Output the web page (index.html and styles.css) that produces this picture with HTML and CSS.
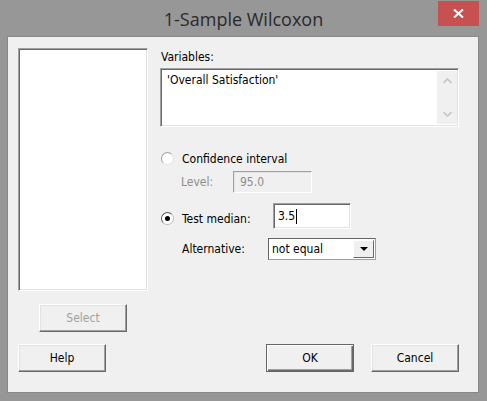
FILE: index.html
```html
<!DOCTYPE html>
<html>
<head>
<meta charset="utf-8">
<title>1-Sample Wilcoxon</title>
<link rel="stylesheet" href="styles.css">
</head>
<body>
<div class="window">
  <div class="titlebar">
    <div class="title">1-Sample Wilcoxon</div>
    <div class="close">
      <svg width="11" height="9" viewBox="0 0 11 9"><path d="M1 0.5 L10 8.5 M10 0.5 L1 8.5" stroke="#fff" stroke-width="2" fill="none"/></svg>
    </div>
  </div>
  <div class="client">
    <div class="main">
      <div class="left">
        <div class="listbox sunken"></div>
        <div class="btn disabled">Select</div>
      </div>
      <div class="right">
        <div class="label var-label">Variables:</div>
        <div class="textarea sunken">
          <div class="ta-text">'Overall Satisfaction'</div>
          <div class="scroll">
            <div class="sb-btn"><svg width="9" height="6" viewBox="0 0 9 6"><path d="M0.5 5 L4.5 1 L8.5 5" stroke="#c4c4c4" stroke-width="1.6" fill="none"/></svg></div>
            <div class="sb-btn"><svg width="9" height="6" viewBox="0 0 9 6"><path d="M0.5 1 L4.5 5 L8.5 1" stroke="#c4c4c4" stroke-width="1.6" fill="none"/></svg></div>
          </div>
        </div>
        <div class="row row-ci">
          <span class="radio"></span>
          <span class="label">Confidence interval</span>
        </div>
        <div class="row row-level">
          <span class="label dim level-label">Level:</span>
          <span class="field level-field">95.0</span>
        </div>
        <div class="row row-tm">
          <span class="radio checked"></span>
          <span class="label tm-label">Test median:</span>
          <span class="field tm-field sunken">3.5<span class="caret"></span></span>
        </div>
        <div class="row row-alt">
          <span class="label alt-label">Alternative:</span>
          <span class="combo">
            <span class="combo-text">not equal</span>
            <span class="combo-btn"><svg width="8" height="4" viewBox="0 0 8 4"><path d="M0 0 H8 L4 4 Z" fill="#000"/></svg></span>
          </span>
        </div>
      </div>
    </div>
    <div class="footer">
      <div class="btn">Help</div>
      <div class="btn default ok">OK</div>
      <div class="btn">Cancel</div>
    </div>
  </div>
</div>
</body>
</html>
```

FILE: styles.css
```css
* { box-sizing: border-box; }

body {
  margin: 0;
  background: #979797;
  font-family: "DejaVu Sans Condensed", "Liberation Sans", sans-serif;
  font-size: 12px;
  color: #000;
}

.window {
  width: 487px;
  height: 401px;
  background: #979797;
  display: flex;
  flex-direction: column;
}

/* caption */
.titlebar {
  height: 37px;
  display: grid;
  grid-template-columns: 1fr auto 1fr;
  flex: none;
}
.title {
  grid-column: 2;
  font-family: "Open Sans", "Noto Sans", sans-serif;
  font-size: 18px;
  line-height: 25px;
  padding-top: 7px;
  color: #2a2a2a;
  white-space: nowrap;
}
.close {
  grid-column: 3;
  justify-self: end;
  align-self: start;
  margin-top: 1px;
  margin-right: 8px;
  width: 41px;
  height: 25px;
  background: #c75050;
  display: flex;
  align-items: center;
  justify-content: center;
}

/* dialog body */
.client {
  flex: 1;
  margin: 0 9px 9px 8px;
  background: #f0f0f0;
  padding: 11px 10px 0 10px;
  box-shadow: 0 0 0 1px #888888;
}

.main {
  display: flex;
  gap: 12px;
}

.left {
  width: 130px;
  display: flex;
  flex-direction: column;
  align-items: center;
  gap: 13px;
}

.sunken {
  border: 1px solid;
  border-color: #a0a0a0 #ffffff #ffffff #a0a0a0;
  box-shadow: inset 1px 1px 0 #696969, inset -1px -1px 0 #e3e3e3;
  background: #fff;
}

.listbox {
  width: 130px;
  height: 243px;
}

.btn {
  width: 88px;
  height: 28px;
  background: #f0f0f0;
  border: 1px solid;
  border-color: #ffffff #696969 #696969 #ffffff;
  box-shadow: inset -1px -1px 0 #a0a0a0, inset 1px 1px 0 #e3e3e3;
  display: flex;
  align-items: center;
  justify-content: center;
  padding-bottom: 1px;
}
.btn.disabled { color: #a0a0a0; }
.btn.default {
  border-color: #646464;
  box-shadow: inset 1px 1px 0 #ffffff, inset -1px -1px 0 #696969, inset -2px -2px 0 #a0a0a0;
}

.right {
  width: 299px;
  display: flex;
  flex-direction: column;
}

.label { white-space: nowrap; line-height: 16px; }
.dim { color: #8d8d8d; }

.var-label {
  margin-top: 1px;
  margin-left: 1px;
  height: 16px;
}

.textarea {
  margin-top: 3px;
  height: 59px;
  display: flex;
  padding: 2px 1px 2px 2px;
}
.ta-text {
  flex: 1;
  padding: 1px 0 0 4px;
  line-height: 16px;
}
.scroll {
  width: 20px;
  background: #f0f0f0;
  display: flex;
  flex-direction: column;
  justify-content: space-between;
}
.sb-btn {
  height: 20px;
  display: flex;
  align-items: center;
  justify-content: center;
}

.row {
  display: flex;
  align-items: center;
}
.row-ci { margin-top: 21px; height: 21px; }
.row-level { margin-top: 2px; height: 22px; }
.row-tm { margin-top: 10px; height: 26px; }
.row-alt { margin-top: 9px; height: 22px; }

.radio {
  width: 13px;
  height: 13px;
  margin-left: 1px;
  margin-right: 8px;
  border-radius: 50%;
  border: 1px solid;
  border-color: #a0a0a0 #e3e3e3 #e3e3e3 #a0a0a0;
  background: #fff;
  display: flex;
  align-items: center;
  justify-content: center;
  flex: none;
}
.radio.checked {
  border-color: #5a5a5a #bdbdbd #bdbdbd #5a5a5a;
}
.radio.checked::after {
  content: "";
  width: 5px;
  height: 5px;
  border-radius: 50%;
  background: #000;
}
.row-tm .radio { margin-top: 5px; }
.row-tm .tm-label { margin-top: 5px; }

.level-label { margin-left: 21px; width: 52px; }
.field {
  display: flex;
  align-items: center;
  padding-left: 5px;
}
.level-field {
  width: 79px;
  height: 22px;
  border: 1px solid;
  border-color: #a0a0a0 #ffffff #ffffff #a0a0a0;
  box-shadow: inset 1px 1px 0 #e3e3e3;
  background: #f0f0f0;
  color: #8d8d8d;
  padding-left: 6px;
}

.tm-label { width: 91px; }
.tm-field {
  width: 78px;
  height: 26px;
  padding-left: 4px;
}
.caret {
  width: 1px;
  height: 15px;
  background: #000;
  margin-left: 1px;
}

.alt-label { margin-left: 22px; width: 86px; }
.combo {
  width: 108px;
  height: 22px;
  background: #fff;
  border: 1px solid;
  border-color: #646464 #a0a0a0 #a0a0a0 #646464;
  display: flex;
  align-items: stretch;
  padding: 1px 1px 1px 1px;
}
.combo-text {
  flex: 1;
  display: flex;
  align-items: center;
  padding-left: 2px;
}
.combo-btn {
  width: 21px;
  background: #f0f0f0;
  border: 1px solid;
  border-color: #ffffff #696969 #696969 #ffffff;
  display: flex;
  align-items: center;
  justify-content: center;
}

.footer {
  display: flex;
  gap: 17px;
  margin-top: 12px;
  padding-right: 9px;
}
.footer .ok { margin-left: auto; }
```
